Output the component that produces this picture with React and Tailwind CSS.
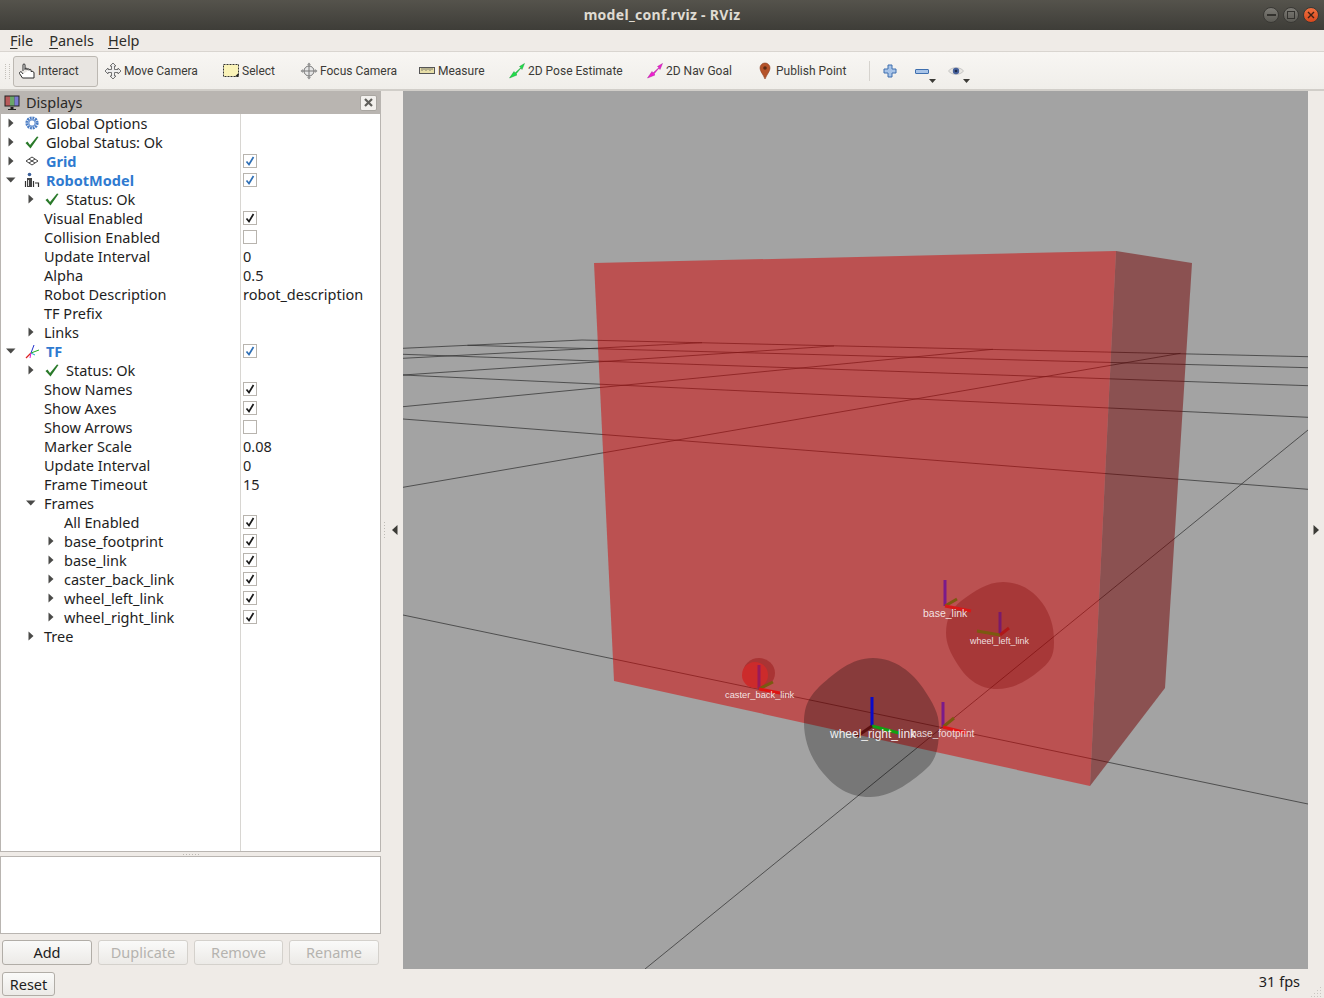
import React from "react";

function Tri({ open }) {
  return (
    <svg width="10" height="10" viewBox="0 0 10 10" className="shrink-0">
      {open ? <path d="M0 2.5H9.5L4.75 7.5Z" fill="#4a4a48" /> : <path d="M2.5 0.5V9.5L7.5 5Z" fill="#4a4a48" />}
    </svg>
  );
}

function Check({ blue, checked = true }) {
  return (
    <span className="flex h-[14px] w-[14px] items-center justify-center border border-[#b8b4ae] bg-white">
      {checked && (
        <svg width="10" height="10" viewBox="0 0 10 10">
          <path d="M1.5 5.5L4 8.5L8.5 1" fill="none" stroke={blue ? "#2f6fb5" : "#1a1a1a"} strokeWidth="1.7" />
        </svg>
      )}
    </span>
  );
}

function GreenTick() {
  return (
    <svg width="14" height="13" viewBox="0 0 14 13" className="shrink-0">
      <path d="M0.5 7L2.5 5.5L5 9L12 0.5L13.5 1L5.5 12.5Z" fill="#2a7a2a" />
    </svg>
  );
}

function GearIcon() {
  return (
    <svg width="14" height="14" viewBox="0 0 14 14" className="shrink-0">
      <circle cx="7" cy="7" r="5.2" fill="none" stroke="#4a7cc4" strokeWidth="2.8" strokeDasharray="1.9 0.8" />
      <circle cx="7" cy="7" r="3.2" fill="none" stroke="#6f98d4" strokeWidth="1.4" />
    </svg>
  );
}

function GridIcon() {
  return (
    <svg width="14" height="10" viewBox="0 0 14 10" className="shrink-0">
      <path d="M7 1L13 5L7 9L1 5ZM4 3L10 7M10 3L4 7" fill="none" stroke="#444" strokeWidth="1" />
    </svg>
  );
}

function RobotIcon() {
  return (
    <svg width="16" height="16" viewBox="0 0 16 16" className="shrink-0">
      <circle cx="5.5" cy="2.5" r="1.8" fill="#3b5f99" />
      <path d="M3 6H8V15H3Z" fill="#444" />
      <path d="M9.5 9V15M11 11H14.5V15M1.5 9V15" fill="none" stroke="#333" strokeWidth="1.2" />
      <path d="M4.5 8V14" stroke="#ddd" strokeWidth="1" />
    </svg>
  );
}

function TfIcon() {
  return (
    <svg width="16" height="16" viewBox="0 0 16 16" className="shrink-0">
      <path d="M7 10L10 2" stroke="#2233cc" strokeWidth="1" />
      <path d="M7 10L15 7" stroke="#22aa22" strokeWidth="1" />
      <path d="M7 10L2 15" stroke="#dd2222" strokeWidth="1.2" />
      <path d="M7 10L6 15" stroke="#dd22dd" strokeWidth="1" />
      <path d="M7 10L11 12" stroke="#22aacc" strokeWidth="1" />
    </svg>
  );
}

function Row({ indent = 0, tri, icon, label, labelClass = "", value, check }) {
  return (
    <div className="flex h-[19px] shrink-0 items-stretch">
      <div className="flex w-[239px] items-center pb-[1px]">
        <span className="w-[5px] shrink-0" />
        <span className="shrink-0" style={{ width: indent }} />
        <span className="flex w-[15px] shrink-0 items-center">{tri && <Tri open={tri === "open"} />}</span>
        {icon ? (
          <span className="mr-[4px] flex w-[21px] shrink-0 items-center justify-center">{icon}</span>
        ) : (
          <span className="w-[3px] shrink-0" />
        )}
        <span className={`whitespace-nowrap ${labelClass}`}>{label}</span>
      </div>
      <div className="flex flex-1 items-center border-l border-[#d8d6d2] pb-[1px] pl-[2px]">
        {check && <Check blue={check === "blue"} checked={check !== "off"} />}
        {value && <span className="whitespace-nowrap">{value}</span>}
      </div>
    </div>
  );
}

function Toolbtn({ icon, label, w, active }) {
  return (
    <div
      className={`flex h-[31px] items-center rounded-[3px] border ${active ? "border-[#bcb8b2] bg-[#e8e5e1] pl-[3px]" : "border-transparent pl-[4px]"}`}
      style={{ width: w }}
    >
      <span className="flex w-[20px] shrink-0 items-center justify-center">{icon}</span>
      <span className="ml-[1px] whitespace-nowrap text-[12px] text-[#3c3b37]" style={{ fontFamily: "Roboto, sans-serif" }}>{label}</span>
    </div>
  );
}

function HandIcon() {
  return (
    <svg width="18" height="18" viewBox="0 0 18 18">
      <path d="M5 9V3C5 1.5 7 1.5 7 3V8M7 7C7 5.8 9 5.8 9 7V8M9 7.5C9 6.4 11 6.4 11 7.5V8.5M11 8C11 7 13 7 13 8V9.5C14.5 9 16 9.5 16 11V16H4.5L1.5 11.5C1 10 3 9 4 10.5L5 12" fill="#fff" stroke="#2b2b2b" strokeWidth="1" />
    </svg>
  );
}
function MoveIcon() {
  return (
    <svg width="18" height="18" viewBox="0 0 18 18">
      <path d="M9 1L12 4H10.5V7.5H14V6L17 9L14 12V10.5H10.5V14H12L9 17L6 14H7.5V10.5H4V12L1 9L4 6V7.5H7.5V4H6Z" fill="#eee" stroke="#666" strokeWidth="0.9" />
    </svg>
  );
}
function SelectIcon() {
  return (
    <svg width="16" height="16" viewBox="0 0 16 16">
      <rect x="0.5" y="1.5" width="15" height="12" fill="#faf3b8" stroke="#333" strokeDasharray="2 1" />
      <path d="M12 13.5H15.5V10Z" fill="#222" />
    </svg>
  );
}
function FocusIcon() {
  return (
    <svg width="18" height="18" viewBox="0 0 18 18">
      <circle cx="9" cy="9" r="5" fill="#e6e6e6" stroke="#777" />
      <path d="M9 1V17M1 9H17" stroke="#777" strokeWidth="1" />
      <path d="M9 0.5L7 3H11ZM9 17.5L7 15H11ZM0.5 9L3 7V11ZM17.5 9L15 7V11Z" fill="#999" />
    </svg>
  );
}
function RulerIcon() {
  return (
    <svg width="16" height="8" viewBox="0 0 16 8">
      <rect x="0.5" y="0.5" width="15" height="6" fill="#e8dfa8" stroke="#555" />
      <path d="M3 1V4M5 1V3M7 1V4M9 1V3M11 1V4M13 1V3" stroke="#555" strokeWidth="0.7" />
    </svg>
  );
}
function ArrowIcon({ fill, stroke }) {
  return (
    <svg width="16" height="16" viewBox="0 0 16 16">
      <path d="M0.5 15L5 8.5L6 10L12 4.5L10.5 3.5L15.5 0.5L13 6.5L12 5L7 11L8 12Z" fill={fill} stroke={stroke} strokeWidth="0.4" />
    </svg>
  );
}
function PinIcon() {
  return (
    <svg width="12" height="18" viewBox="0 0 12 18">
      <path d="M6 17C4 12 1 9.5 1 6A5 5 0 0 1 11 6C11 9.5 8 12 6 17Z" fill="#b5532a" stroke="#8a3d1e" strokeWidth="0.6" />
      <circle cx="6" cy="6" r="1.8" fill="#5a2a15" />
    </svg>
  );
}

function Caret({ className }) {
  return (
    <svg width="7" height="4" viewBox="0 0 7 4" className={`absolute ${className}`}>
      <path d="M0 0H7L3.5 4Z" fill="#3c3b37" />
    </svg>
  );
}

function Scene() {
  const lines = [
    [0, 257.3, 179, 249],
    [179, 249, 905, 265.7],
    [64.5, 254.3, 905, 276.7],
    [0, 267.3, 299, 251.7],
    [0, 263.3, 905, 294.7],
    [0, 284, 431, 255],
    [0, 284, 905, 326.3],
    [0, 315.7, 590, 258.3],
    [0, 328, 905, 398.3],
    [0, 396.3, 777.5, 262.3],
    [242, 878, 905, 339],
    [0, 524, 905, 713],
  ];
  return (
    <svg viewBox="0 0 905 878" width="905" height="878" className="block" style={{ fontFamily: "'Liberation Sans', sans-serif" }}>
      <rect width="905" height="878" fill="#a3a3a3" />
      {lines.map((l, i) => (
        <line key={i} x1={l[0]} y1={l[1]} x2={l[2]} y2={l[3]} stroke="#2e2e2e" strokeOpacity="0.8" strokeWidth="0.9" />
      ))}
      <path d="M713 160L789 172L762 597L687 695Z" fill="#730000" fillOpacity="0.5" />
      <path d="M191 172L713 160L687 695L211 590Z" fill="#d30000" fillOpacity="0.5" />
      {/* left wheel */}
      <path d="M600 491C620 491 634 503 642 516C650 530 651 540 651 552C651 566 646 572 636 580C624 590 610 598 594 598C576 598 564 588 555 574C547 562 543 552 543 542C543 528 548 518 558 510C572 500 584 491 600 491Z" fill="#7a0000" fillOpacity="0.3" />
      {/* right wheel */}
      <path d="M470 567C492 567 510 582 520 597C530 612 536 622 536 636C536 655 534 668 524 677C512 688 490 706 467 706C445 706 432 696 420 682C408 668 401 650 401 632C401 612 408 604 418 594C432 582 448 567 470 567Z" fill="#000000" fillOpacity="0.27" />
      {/* caster */}
      <ellipse cx="356" cy="582" rx="16" ry="15" fill="#a93434" />
      <circle cx="352" cy="584" r="13" fill="#cc2b2b" />
      {/* axes */}
      <g strokeWidth="3" fill="none">
        <path d="M542 489V515" stroke="#7a1a8a" />
        <path d="M542 515L554 508" stroke="#7a5a10" />
        <path d="M542 515L568 520" stroke="#d81818" />
        <path d="M597 521V544" stroke="#7a1a6a" />
        <path d="M597 544L574 540" stroke="#7a5a10" />
        <path d="M597 544L606 537" stroke="#b01818" />
        <path d="M356 574V598" stroke="#9a1a5a" />
        <path d="M356 598L370 591" stroke="#7a5a10" />
        <path d="M356 598L377 602" stroke="#e01414" />
        <path d="M540 611V636" stroke="#7a1a8a" />
        <path d="M540 636L551 627" stroke="#7a5a10" />
        <path d="M540 636L564 642" stroke="#e01414" />
        <path d="M469 606V635" stroke="#0a0ac8" />
        <path d="M469 635L496 642" stroke="#12a012" />
        <path d="M469 635L453 646" stroke="#5a1010" />
      </g>
      <text x="520" y="526" fontSize="10.5" className="fill-white" fillOpacity="0.85">base_link</text>
      <text x="567" y="553" fontSize="9" className="fill-white" fillOpacity="0.85">wheel_left_link</text>
      <text x="322" y="607" fontSize="9.3" className="fill-white" fillOpacity="0.85">caster_back_link</text>
      <text x="427" y="647" fontSize="12" className="fill-white" fillOpacity="0.9">wheel_right_link</text>
      <text x="508" y="646" fontSize="10" className="fill-white" fillOpacity="0.8">base_footprint</text>
    </svg>
  );
}

function Btn({ w, children, disabled }) {
  return (
    <div
      className={`flex h-[25px] items-center justify-center rounded-[3px] border bg-gradient-to-b from-[#fafaf9] to-[#eceae7] ${disabled ? "border-[#d4d1cc] text-[#b5b3af]" : "border-[#b1ada7] text-[#1c1c1c]"}`}
      style={{ width: w }}
    >
      {children}
    </div>
  );
}

export default function App() {
  return (
    <div className="relative flex h-[998px] w-[1324px] flex-col overflow-hidden bg-[#efebe7] text-[14.5px] leading-none text-[#1e1e1e]" style={{ fontFamily: "'Noto Sans', sans-serif" }}>
      {/* title bar */}
      <div className="relative flex h-[30px] shrink-0 items-center justify-center bg-gradient-to-b from-[#55534c] to-[#3e3d38]">
        <span className="text-[14px] font-bold tracking-[0.3px] text-[#dfdbd2]">model_conf.rviz - RViz</span>
        <div className="absolute right-[5px] top-[7px] flex gap-[4px]">
          <span className="flex h-[16px] w-[16px] items-center justify-center rounded-full border border-[#3a3935] bg-gradient-to-b from-[#7d7b75] to-[#5b5a54]">
            <span className="h-[1.5px] w-[9px] bg-[#33322e]" />
          </span>
          <span className="flex h-[16px] w-[16px] items-center justify-center rounded-full border border-[#3a3935] bg-gradient-to-b from-[#7d7b75] to-[#5b5a54]">
            <span className="h-[8px] w-[8px] border border-[#33322e]" />
          </span>
          <span className="flex h-[16px] w-[16px] items-center justify-center rounded-full border border-[#3a3935] bg-gradient-to-b from-[#f0703f] to-[#d9481c]">
            <svg width="8" height="8" viewBox="0 0 8 8"><path d="M1 1L7 7M7 1L1 7" stroke="#3c2015" strokeWidth="1.4" /></svg>
          </span>
        </div>
      </div>

      {/* menu bar */}
      <div className="flex h-[22px] shrink-0 items-center gap-[14px] border-b border-[#d9d5d0] pl-[10px] text-[14.5px] text-[#2e2d29]">
        <span className="mr-[2px]"><span className="underline underline-offset-2">F</span>ile</span>
        <span><span className="underline underline-offset-2">P</span>anels</span>
        <span><span className="underline underline-offset-2">H</span>elp</span>
      </div>

      {/* tool bar */}
      <div className="flex h-[39px] shrink-0 items-center border-b-2 border-[#d1cec9] bg-gradient-to-b from-[#f8f6f3] to-[#f0eeea] pl-[5px] pt-[1px]">
        <div className="mr-[2px] grid w-[6px] grid-cols-2 gap-[1px]">
          {Array.from({ length: 16 }).map((_, i) => <span key={i} className="h-[1px] w-[1px] bg-[#c4c1bb]" />)}
        </div>
        <Toolbtn active w={85} icon={<HandIcon />} label="Interact" />
        <Toolbtn w={118} icon={<MoveIcon />} label="Move Camera" />
        <Toolbtn w={78} icon={<SelectIcon />} label="Select" />
        <Toolbtn w={118} icon={<FocusIcon />} label="Focus Camera" />
        <Toolbtn w={90} icon={<RulerIcon />} label="Measure" />
        <Toolbtn w={138} icon={<ArrowIcon fill="#1fe04a" stroke="#0d8a28" />} label="2D Pose Estimate" />
        <Toolbtn w={110} icon={<ArrowIcon fill="#f01fd0" stroke="#a01090" />} label="2D Nav Goal" />
        <Toolbtn w={110} icon={<PinIcon />} label="Publish Point" />
        <div className="mx-[9px] h-[20px] w-px bg-[#d6d3ce]" />
        <div className="flex w-[32px] items-center pl-[4px]">
          <svg width="14" height="14" viewBox="0 0 14 14"><path d="M5 1H9V5H13V9H9V13H5V9H1V5H5Z" fill="#a8c4e8" stroke="#3f6fae" /></svg>
        </div>
        <div className="flex w-[32px] items-center pl-[4px]">
          <span className="relative block h-[5px] w-[14px] rounded-[1px] border border-[#3f6fae] bg-[#a8c4e8]">
            <Caret className="bottom-[-10px] right-[-8px]" />
          </span>
        </div>
        <div className="flex w-[32px] items-center pl-[5px]">
          <span className="relative block">
            <svg width="16" height="10" viewBox="0 0 16 10" className="block"><path d="M0.5 5C4 0.5 12 0.5 15.5 5C12 9.5 4 9.5 0.5 5Z" fill="#e8e6e2" stroke="#aaa" strokeWidth="0.6" /><circle cx="8" cy="5" r="3.2" fill="#46609a" /><circle cx="8" cy="5" r="1.3" fill="#1d2a4a" /></svg>
            <Caret className="bottom-[-7px] right-[-6px]" />
          </span>
        </div>
      </div>

      {/* main */}
      <div className="flex min-h-0 flex-1">
        <div className="flex w-[381px] shrink-0 flex-col">
          <div className="flex h-[23px] shrink-0 items-center bg-[#b9b5b1] px-[4px]">
            <svg width="16" height="16" viewBox="0 0 16 16" className="shrink-0">
              <rect x="0.5" y="0.5" width="15" height="11" fill="#222" />
              <rect x="1.5" y="1.5" width="4.5" height="9" fill="#b85a5a" />
              <rect x="6" y="1.5" width="4.5" height="9" fill="#6aa66a" />
              <rect x="10.5" y="1.5" width="4" height="9" fill="#7a7ad0" />
              <path d="M6.5 12H9.5V14H12V15H4V14H6.5Z" fill="#222" />
            </svg>
            <span className="ml-[6px] flex-1 text-[#2a2927]">Displays</span>
            <span className="flex h-[16px] w-[17px] items-center justify-center rounded-[2px] border border-[#a9a6a1] bg-[#f2f0ed]">
              <svg width="9" height="9" viewBox="0 0 9 9"><path d="M1 1L8 8M8 1L1 8" stroke="#5f5e5a" strokeWidth="2.2" /></svg>
            </span>
          </div>
          <div className="flex h-[738px] shrink-0 flex-col border-x border-b border-[#b9b5b1] bg-white">
            <Row tri="closed" icon={<GearIcon />} label="Global Options" />
            <Row tri="closed" icon={<GreenTick />} label="Global Status: Ok" />
            <Row tri="closed" icon={<GridIcon />} label="Grid" labelClass="font-bold text-[#2f7ad0]" check="blue" />
            <Row tri="open" icon={<RobotIcon />} label="RobotModel" labelClass="font-bold text-[#2f7ad0]" check="blue" />
            <Row indent={20} tri="closed" icon={<GreenTick />} label="Status: Ok" />
            <Row indent={20} label="Visual Enabled" check="on" />
            <Row indent={20} label="Collision Enabled" check="off" />
            <Row indent={20} label="Update Interval" value="0" />
            <Row indent={20} label="Alpha" value="0.5" />
            <Row indent={20} label="Robot Description" value="robot_description" />
            <Row indent={20} label="TF Prefix" />
            <Row indent={20} tri="closed" label="Links" />
            <Row tri="open" icon={<TfIcon />} label="TF" labelClass="font-bold text-[#2f7ad0]" check="blue" />
            <Row indent={20} tri="closed" icon={<GreenTick />} label="Status: Ok" />
            <Row indent={20} label="Show Names" check="on" />
            <Row indent={20} label="Show Axes" check="on" />
            <Row indent={20} label="Show Arrows" check="off" />
            <Row indent={20} label="Marker Scale" value="0.08" />
            <Row indent={20} label="Update Interval" value="0" />
            <Row indent={20} label="Frame Timeout" value="15" />
            <Row indent={20} tri="open" label="Frames" />
            <Row indent={40} label="All Enabled" check="on" />
            <Row indent={40} tri="closed" label="base_footprint" check="on" />
            <Row indent={40} tri="closed" label="base_link" check="on" />
            <Row indent={40} tri="closed" label="caster_back_link" check="on" />
            <Row indent={40} tri="closed" label="wheel_left_link" check="on" />
            <Row indent={40} tri="closed" label="wheel_right_link" check="on" />
            <Row indent={20} tri="closed" label="Tree" />
            <div className="ml-[239px] flex-1 border-l border-[#d8d6d2]" />
          </div>
          <div className="flex h-[4px] shrink-0 items-center justify-center gap-[2px]">
            {Array.from({ length: 6 }).map((_, i) => <span key={i} className="h-[1px] w-[1px] bg-[#bdbab5]" />)}
          </div>
          <div className="h-[78px] shrink-0 border border-[#b9b5b1] bg-white" />
          <div className="mt-[6px] flex gap-[6px] pl-[2px]">
            <Btn w={90}>Add</Btn>
            <Btn w={90} disabled>Duplicate</Btn>
            <Btn w={89} disabled>Remove</Btn>
            <Btn w={90} disabled>Rename</Btn>
          </div>
        </div>
        <div className="flex w-[22px] shrink-0 items-center pl-[3px]">
          <div className="flex flex-col gap-[2px]">
            {Array.from({ length: 6 }).map((_, i) => <span key={i} className="h-[1px] w-[1px] bg-[#bdbab5]" />)}
          </div>
          <svg width="6" height="10" viewBox="0 0 6 10" className="ml-[7px]"><path d="M5.5 0V10L0 5Z" fill="#3c3b37" /></svg>
        </div>
        <div className="w-[905px] shrink-0"><Scene /></div>
        <div className="flex w-[16px] shrink-0 items-center justify-center">
          <svg width="6" height="10" viewBox="0 0 6 10"><path d="M0.5 0V10L6 5Z" fill="#3c3b37" /></svg>
        </div>
      </div>

      {/* status bar */}
      <div className="flex h-[29px] shrink-0 items-start justify-between pl-[2px] pr-[24px] pt-[3px]">
        <div className="flex h-[24px] w-[53px] items-center justify-center rounded-[3px] border border-[#b1ada7] bg-gradient-to-b from-[#fafaf9] to-[#eceae7]">Reset</div>
        <span className="mt-[2px]">31 fps</span>
      </div>
      <svg width="11" height="11" viewBox="0 0 11 11" className="absolute bottom-[1px] right-[2px]">
        <path d="M9 1h1v1H9zM6 4h1v1H6zM9 4h1v1H9zM3 7h1v1H3zM6 7h1v1H6zM9 7h1v1H9zM0 10h1v1H0zM3 10h1v1H3zM6 10h1v1H6zM9 10h1v1H9z" fill="#c9c6c1" />
      </svg>
    </div>
  );
}
